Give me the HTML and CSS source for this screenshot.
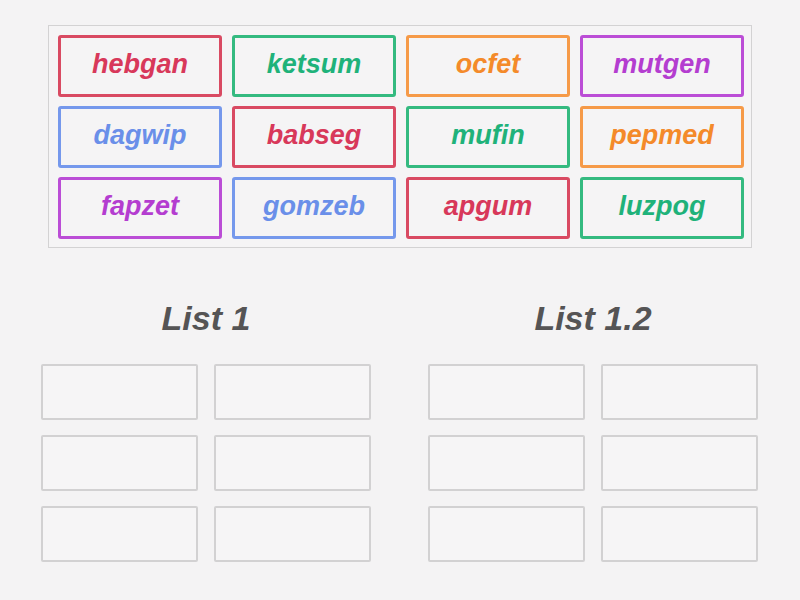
FILE: index.html
```html
<!DOCTYPE html>
<html lang="en">
<head>
  <meta charset="UTF-8">
  <title>Group sort</title>
  <link rel="stylesheet" href="styles.css">
</head>
<body>

  <div class="banco">
    <div class="carta vermelho">hebgan</div>
    <div class="carta verde">ketsum</div>
    <div class="carta laranja">ocfet</div>
    <div class="carta roxo">mutgen</div>
    <div class="carta azul">dagwip</div>
    <div class="carta vermelho">babseg</div>
    <div class="carta verde">mufin</div>
    <div class="carta laranja">pepmed</div>
    <div class="carta roxo">fapzet</div>
    <div class="carta azul">gomzeb</div>
    <div class="carta vermelho">apgum</div>
    <div class="carta verde">luzpog</div>
  </div>

  <div class="grupos">
    <div class="grupo">
      <h2>List 1</h2>
      <div class="caixas">
        <div class="caixa"></div>
        <div class="caixa"></div>
        <div class="caixa"></div>
        <div class="caixa"></div>
        <div class="caixa"></div>
        <div class="caixa"></div>
      </div>
    </div>
    <div class="grupo">
      <h2>List 1.2</h2>
      <div class="caixas">
        <div class="caixa"></div>
        <div class="caixa"></div>
        <div class="caixa"></div>
        <div class="caixa"></div>
        <div class="caixa"></div>
        <div class="caixa"></div>
      </div>
    </div>
  </div>

</body>
</html>
```

FILE: styles.css
```css
body {
  font-family: "Liberation Sans", Arial, sans-serif;
  background: #f4f3f4;
  margin: 0;
  width: 800px;
  height: 600px;
  overflow: hidden;
}

.banco {
  box-sizing: border-box;
  margin: 25px 0 0 48px;
  width: 704px;
  height: 223px;
  border: 1px solid #d3d2d3;
  padding: 9px 8px 8px 9px;
  display: grid;
  grid-template-columns: repeat(4, 164px);
  grid-template-rows: repeat(3, 62px);
  column-gap: 10px;
  row-gap: 9px;
  background: #f5f4f5;
}

.carta {
  box-sizing: border-box;
  border: 3px solid;
  border-radius: 3px;
  display: flex;
  align-items: center;
  justify-content: center;
  font-size: 27px;
  font-weight: bold;
  font-style: italic;
  padding-bottom: 4px;
}

.vermelho { color: #d8385a; border-color: #d94a62; }
.verde { color: #1fb27a; border-color: #34ba80; }
.laranja { color: #f48a2a; border-color: #f69a48; }
.roxo { color: #b43dd0; border-color: #bb4dd6; }
.azul { color: #6a8fe9; border-color: #7598ec; }

.grupos {
  display: flex;
  gap: 57px;
  padding-left: 41px;
  margin-top: 48px;
}

.grupo {
  width: 330px;
}

h2 {
  margin: 0 0 23px;
  text-align: center;
  font-size: 34px;
  font-style: italic;
  font-weight: bold;
  color: #555455;
  line-height: 45px;
}

.caixas {
  display: grid;
  grid-template-columns: repeat(2, 157px);
  grid-auto-rows: 56px;
  gap: 15px 16px;
}

.caixa {
  box-sizing: border-box;
  border: 2px solid #d2d1d2;
  border-radius: 2px;
  background: #f6f5f6;
}
```
